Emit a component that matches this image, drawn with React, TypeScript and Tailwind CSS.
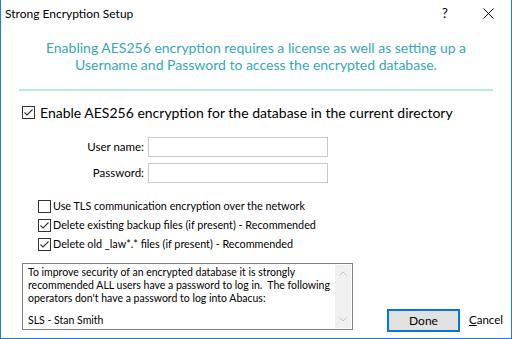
import React from 'react';

const font = { fontFamily: 'Lato, "Noto Sans", sans-serif' };

const Check = ({ checked }: { checked: boolean }) => (
  <svg width="13" height="13" viewBox="0 0 13 13" className="shrink-0">
    <rect x="0.5" y="0.5" width="12" height="12" fill="#fff" stroke="#333" />
    {checked && <path d="M2.5 6.5 L5 9 L10.5 3.5" fill="none" stroke="#333" strokeWidth="1.1" />}
  </svg>
);

const Option = ({ checked, label }: { checked: boolean; label: string }) => (
  <label className="flex items-center gap-[2px] h-[19px] text-[10.8px] text-black whitespace-nowrap">
    <Check checked={checked} />
    <span>{label}</span>
  </label>
);

const Field = ({ label }: { label: string }) => (
  <div className="flex items-center">
    <span className="w-[147px] pr-[4px] text-right text-[11.5px] text-black">{label}</span>
    <div className="w-[180px] h-[20px] border border-[#c8c8c8] bg-white" />
  </div>
);

const App = () => {
  return (
    <div
      className="w-[512px] h-[339px] bg-white border-l border-r border-b border-[#1883d7] flex flex-col overflow-hidden"
      style={font}
    >
      {/* title bar */}
      <div className="h-[27px] shrink-0 flex items-center pl-[4px] text-[12px] text-black">
        <span>Strong Encryption Setup</span>
        <span className="ml-auto w-[12px] text-center text-[13px]">?</span>
        <svg width="11" height="11" viewBox="0 0 11 11" className="ml-[32px] mr-[17px]">
          <path d="M0.5 0.5 L10.5 10.5 M10.5 0.5 L0.5 10.5" stroke="#000" strokeWidth="1" />
        </svg>
      </div>

      {/* heading */}
      <div className="pt-[12px] text-center text-[14px] leading-[17px] text-[#36a8b8] whitespace-nowrap">
        <p>Enabling AES256 encryption requires a license as well as setting up a</p>
        <p>Username and Password to access the encrypted database.</p>
      </div>
      <div className="mx-[18px] mt-[16px] h-[2px] shrink-0 bg-[#bfe7ea]" />

      {/* main option */}
      <label className="mt-[11px] h-[20px] pl-[21px] flex items-center gap-[5px] text-[14px] text-black whitespace-nowrap">
        <Check checked />
        <span>Enable AES256 encryption for the database in the current directory</span>
      </label>

      <div className="mt-[15px] flex flex-col gap-[6px]">
        <Field label="User name:" />
        <Field label="Password:" />
      </div>

      <div className="mt-[14px] pl-[37px] flex flex-col">
        <Option checked={false} label="Use TLS communication encryption over the network" />
        <Option checked label="Delete existing backup files (if present) - Recommended" />
        <Option checked label="Delete old _law*.* files (if present) - Recommended" />
      </div>

      {/* bottom */}
      <div className="mt-[9px] pl-[21px] flex items-end">
        <div className="w-[331px] h-[67px] shrink-0 border border-[#828282] flex">
          <div className="flex-1 min-w-0 pl-[5px] pt-[2px] text-[10.5px] leading-[13px] text-black whitespace-nowrap">
            <p>To improve security of an encrypted database it is strongly</p>
            <p>recommended ALL users have a password to log in.&nbsp; The following</p>
            <p>operators don't have a password to log into Abacus:</p>
            <div className="h-[9px]" />
            <p>SLS - Stan Smith</p>
          </div>
          <div className="w-[16px] shrink-0 my-[1px] mr-[1px] bg-[#f0f0f0] flex flex-col justify-between items-center py-[6px]">
            <svg width="8" height="5" viewBox="0 0 8 5">
              <path d="M0.5 4.5 L4 1 L7.5 4.5" fill="none" stroke="#c2c2c2" />
            </svg>
            <svg width="8" height="5" viewBox="0 0 8 5">
              <path d="M0.5 0.5 L4 4 L7.5 0.5" fill="none" stroke="#c2c2c2" />
            </svg>
          </div>
        </div>
        <button className="ml-[34px] -mb-[2px] w-[73px] h-[23px] shrink-0 border-2 border-[#0078d7] bg-[#e1e1e1] text-[12px] text-black">
          Done
        </button>
        <span className="ml-[9px] mb-[2px] text-[11.5px] text-black">
          <span className="underline">C</span>ancel
        </span>
      </div>
    </div>
  );
};

export default App;
